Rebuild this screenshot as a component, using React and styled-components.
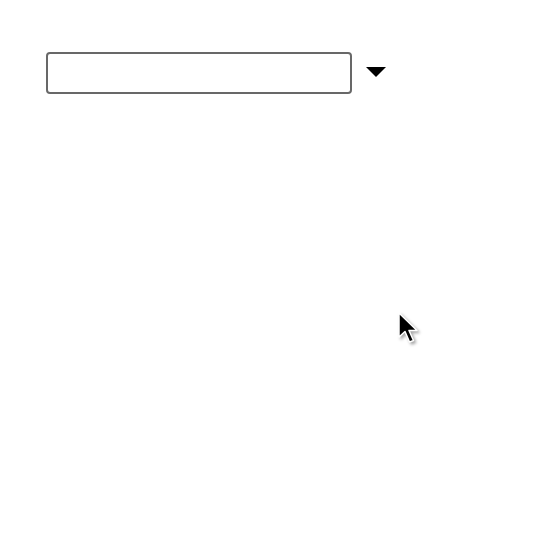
import React from "react";
import styled, { createGlobalStyle } from "styled-components";

const Global = createGlobalStyle`
  html, body { margin: 0; padding: 0; background: #ffffff; }
  body { font-family: "Liberation Sans", Arial, sans-serif; }
`;

const Page = styled.div`
  position: relative;
  width: 550px;
  height: 534px;
  padding: 52px 0 0 46px;
  box-sizing: border-box;
`;

const Row = styled.div`
  display: flex;
  align-items: center;
  gap: 14px;
`;

const Field = styled.input`
  width: 306px;
  height: 42px;
  box-sizing: border-box;
  border: 2px solid #686868;
  border-radius: 4px;
  background: #ffffff;
  padding: 0 8px;
  font-family: "Liberation Sans", Arial, sans-serif;
  font-size: 16px;
  outline: none;
`;

const Toggle = styled.button`
  width: 20px;
  height: 10px;
  padding: 0;
  border: none;
  background: transparent;
  display: flex;
  cursor: pointer;
  margin-top: -3px;
`;

const Pointer = styled.svg`
  position: absolute;
  left: ${(p) => p.$x}px;
  top: ${(p) => p.$y}px;
  overflow: visible;
  pointer-events: none;
  filter: drop-shadow(2px 2px 1.5px rgba(0, 0, 0, 0.35));
`;

export default function App() {
  return (
    <>
      <Global />
      <Page>
        <Row>
          <Field type="text" aria-label="combo" />
          <Toggle aria-label="open">
            <svg width="20" height="10" viewBox="0 0 20 10">
              <polygon points="0,0 20,0 10,10" fill="#000" />
            </svg>
          </Toggle>
        </Row>
        <Pointer $x={398} $y={312} width="22" height="36" viewBox="0 0 22 36">
          <path
            d="M1 1 L1 25 L7 19.5 L11.5 30 L15.5 28.5 L11 18.5 L19 18.5 Z"
            fill="#000"
            stroke="#fff"
            strokeWidth="1.5"
            strokeLinejoin="round"
          />
        </Pointer>
      </Page>
    </>
  );
}
